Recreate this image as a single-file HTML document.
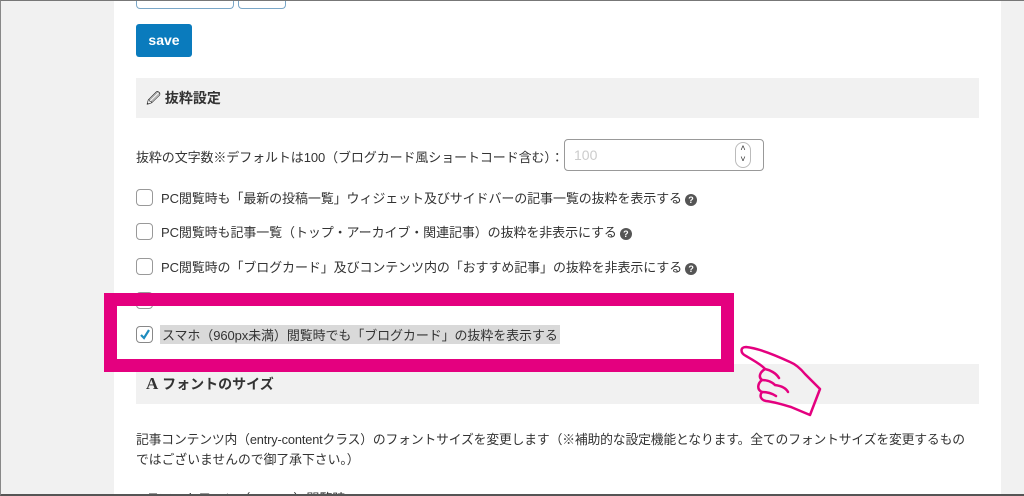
<!DOCTYPE html>
<html><head><meta charset="utf-8"><style>
*{margin:0;padding:0;box-sizing:border-box}
html,body{width:1024px;height:496px;overflow:hidden}
body{position:relative;background:#f1f1f1;font-family:"Liberation Sans","Noto Sans CJK JP",sans-serif;color:#444;font-size:13px}
.frame{position:absolute;left:0;top:0;width:1024px;height:496px;border-top:1px solid #777;border-left:1px solid #888;border-bottom:2px solid #555}
.panel{position:absolute;left:114px;top:0;width:887px;height:496px;background:#fff}
.ab{position:absolute;white-space:nowrap}
.inp{position:absolute;border:1px solid #7aa7c8;border-top:none;border-radius:0 0 4px 4px;background:#fff}
.save{position:absolute;left:136px;top:24px;width:56px;height:33px;background:#0a7bbd;border-radius:3px;color:#fff;font-size:14px;font-weight:bold;text-align:center;line-height:33px}
.hd{position:absolute;left:136px;width:843px;background:#f1f1f1;font-weight:bold;font-size:14px;color:#333}
.cb{position:absolute;left:136px;width:17px;height:17px;border:1px solid #999;border-radius:4px;background:#fff}
.t{position:absolute;left:161px;font-size:13px;color:#333;white-space:nowrap;letter-spacing:-0.1px}
.q{display:inline-block;width:12px;height:12px;border-radius:50%;background:#555;color:#fff;font-size:9px;font-weight:bold;text-align:center;line-height:12px;margin-left:3px;vertical-align:0}
</style></head><body>
<div class="panel"></div>
<div class="inp" style="left:136px;top:-4px;width:98px;height:13px"></div>
<div class="inp" style="left:238px;top:-4px;width:48px;height:13px"></div>
<div class="save">save</div>
<div class="hd" style="top:78px;height:40px;line-height:40px;padding-left:10px"><span style="font-weight:normal;font-size:14px">&#x1F589;</span> 抜粋設定</div>
<div class="ab" style="left:136px;top:147px;color:#333;letter-spacing:-0.1px">抜粋の文字数※デフォルトは100（ブログカード風ショートコード含む）：</div>
<div style="position:absolute;left:564px;top:139px;width:200px;height:32px;border:1px solid #999;border-radius:4px;background:#fff">
<span style="position:absolute;left:9px;top:7px;color:#ccc;font-size:14px">100</span>
<span style="position:absolute;left:170px;top:2px;width:16px;height:26px;border:1px solid #bbb;border-radius:8px;font-size:9px;line-height:11px;text-align:center;color:#333">&#x2C4;<br>&#x2C5;</span></div>
<div class="cb" style="top:189px"></div><div class="t" style="top:188px">PC閲覧時も「最新の投稿一覧」ウィジェット及びサイドバーの記事一覧の抜粋を表示する<span class="q">?</span></div>
<div class="cb" style="top:223px"></div><div class="t" style="top:222px">PC閲覧時も記事一覧（トップ・アーカイブ・関連記事）の抜粋を非表示にする<span class="q">?</span></div>
<div class="cb" style="top:258px"></div><div class="t" style="top:257px">PC閲覧時の「ブログカード」及びコンテンツ内の「おすすめ記事」の抜粋を非表示にする<span class="q">?</span></div>
<div class="cb" style="top:292px"></div>
<div class="cb" style="top:326px;border-color:#888"><svg width="15" height="15" style="position:absolute;left:0;top:0"><path d="M4 8 L7 11 L12 3" fill="none" stroke="#1e8cbe" stroke-width="2.2"/></svg></div>
<div class="t" style="top:325px;background:#d9d9d9;padding:0 2px;left:160px">スマホ（960px未満）閲覧時でも「ブログカード」の抜粋を表示する</div>
<div class="hd" style="top:364px;height:40px;line-height:40px;padding-left:10px"><span style="font-family:'Liberation Serif',serif;font-size:17px">A</span> フォントのサイズ</div>
<div class="ab" style="left:136px;top:429px;color:#333;font-size:12.8px;letter-spacing:-0.15px">記事コンテンツ内（entry-contentクラス）のフォントサイズを変更します（※補助的な設定機能となります。全てのフォントサイズを変更するもの</div>
<div class="ab" style="left:136px;top:449px;color:#333;font-size:12.8px">ではございませんので御了承下さい。）</div>
<div class="ab" style="left:136px;top:488px;color:#333">▯ スマートフォン（~599px）閲覧時</div>
<div style="position:absolute;left:104px;top:293px;width:630px;height:79px;border:13px solid #e4007f"></div>
<svg style="position:absolute;left:0;top:0" width="1024" height="496" fill="none" stroke="#e4007f" stroke-width="2.5" stroke-linejoin="round" stroke-linecap="round">
<path d="M790 362 C775 355 757 348 746 347 C740 347 740 353 746 356 C753 360 762 365 765 369 C760 372 758 377 762 380 C757 384 757 390 762 392 C759 396 761 400 766 401 C775 402 784 405 791 407 L810 415 L820 389 L805 374 C800 368 795 364 790 362 Z"/>
<path d="M765 369 C770 370 776 373 779 378 M762 380 C767 380 772 382 775 385 M762 392 C768 392 773 394 776 396 M775 385 C782 386 786 388 788 392"/>
</svg>
<div class="frame"></div>
</body></html>
